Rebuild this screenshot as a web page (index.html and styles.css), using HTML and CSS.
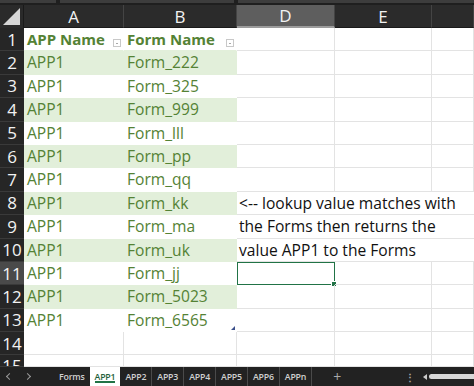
FILE: index.html
```html
<!DOCTYPE html>
<html lang="en">
<head>
    <meta charset="UTF-8">
    <title>APP1 - Sheet</title>
    <link rel="stylesheet" href="styles.css">
</head>
<body>
    <div class="ribbon-edge">
        <span class="seg s1"></span><span class="seg s2"></span><span class="seg s3"></span>
    </div>
    <div class="sheet">
        <div class="corner"></div>
        <div class="col-head">A</div>
        <div class="col-head">B</div>
        <div class="col-head selected">D</div>
        <div class="col-head">E</div>
        <div class="col-head"></div>

        <div class="row-head">1</div>
        <div class="cell th">APP Name<span class="filter"></span></div>
        <div class="cell th">Form Name<span class="filter"></span></div>
        <div class="cell"></div><div class="cell"></div><div class="cell"></div>

        <div class="row-head">2</div>
        <div class="cell band">APP1</div><div class="cell band">Form_222</div>
        <div class="cell"></div><div class="cell"></div><div class="cell"></div>

        <div class="row-head">3</div>
        <div class="cell td">APP1</div><div class="cell td">Form_325</div>
        <div class="cell"></div><div class="cell"></div><div class="cell"></div>

        <div class="row-head">4</div>
        <div class="cell band">APP1</div><div class="cell band">Form_999</div>
        <div class="cell"></div><div class="cell"></div><div class="cell"></div>

        <div class="row-head">5</div>
        <div class="cell td">APP1</div><div class="cell td">Form_lll</div>
        <div class="cell"></div><div class="cell"></div><div class="cell"></div>

        <div class="row-head">6</div>
        <div class="cell band">APP1</div><div class="cell band">Form_pp</div>
        <div class="cell"></div><div class="cell"></div><div class="cell"></div>

        <div class="row-head">7</div>
        <div class="cell td">APP1</div><div class="cell td">Form_qq</div>
        <div class="cell"></div><div class="cell"></div><div class="cell"></div>

        <div class="row-head">8</div>
        <div class="cell band">APP1</div><div class="cell band">Form_kk</div>
        <div class="cell note">&lt;-- lookup value matches with</div>

        <div class="row-head">9</div>
        <div class="cell td">APP1</div><div class="cell td">Form_ma</div>
        <div class="cell note">the Forms then returns the</div>

        <div class="row-head">10</div>
        <div class="cell band">APP1</div><div class="cell band">Form_uk</div>
        <div class="cell note">value APP1 to the Forms</div>

        <div class="row-head active">11</div>
        <div class="cell td">APP1</div><div class="cell td">Form_jj</div>
        <div class="cell current"><span class="fill-handle"></span></div><div class="cell"></div><div class="cell"></div>

        <div class="row-head">12</div>
        <div class="cell band">APP1</div><div class="cell band">Form_5023</div>
        <div class="cell"></div><div class="cell"></div><div class="cell"></div>

        <div class="row-head">13</div>
        <div class="cell td">APP1</div><div class="cell td last">Form_6565<span class="resize"></span></div>
        <div class="cell"></div><div class="cell"></div><div class="cell"></div>

        <div class="row-head">14</div>
        <div class="cell"></div><div class="cell"></div>
        <div class="cell"></div><div class="cell"></div><div class="cell"></div>

        <div class="row-head last-row">15</div>
        <div class="cell"></div><div class="cell"></div>
        <div class="cell"></div><div class="cell"></div><div class="cell"></div>
    </div>

    <div class="tabbar">
        <span class="nav prev"></span>
        <span class="nav next"></span>
        <div class="tabs">
            <span class="tab">Forms</span>
            <span class="tab active">APP1</span>
            <span class="tab">APP2</span>
            <span class="tab">APP3</span>
            <span class="tab">APP4</span>
            <span class="tab">APP5</span>
            <span class="tab">APP6</span>
            <span class="tab">APPn</span>
        </div>
        <span class="add">+</span>
        <span class="dots">&#8942;</span>
        <div class="scroll">
            <span class="arrow"></span>
            <span class="thumb"></span>
        </div>
    </div>
</body>
</html>
```

FILE: styles.css
```css
body {
    margin: 0;
    width: 474px;
    height: 386px;
    overflow: hidden;
    background: #fff;
    font-family: "Open Sans", "Liberation Sans", sans-serif;
}

.ribbon-edge {
    height: 5px;
    background: #1f1f1f;
    display: flex;
    gap: 4px;
}

.seg {
    height: 3px;
    background: #3d3d3d;
}

.s1 { width: 56px; }
.s2 { width: 174px; }
.s3 { flex: 1; }

.sheet {
    display: grid;
    grid-template-columns: 24px 100px 113px 98px 97px 42px;
    grid-template-rows: 23px repeat(14, 23.4px) 1fr;
    height: 362px;
    overflow: hidden;
}

.corner {
    background: #2a2a2a;
    border-right: 1px solid #1a1a1a;
    position: relative;
}

.corner::after {
    content: "";
    position: absolute;
    right: 3px;
    bottom: 3px;
    border-left: 17px solid transparent;
    border-bottom: 17px solid #d6d6d6;
}

.col-head {
    background: #2b2b2b;
    color: #f2f2f2;
    font-size: 17px;
    display: flex;
    align-items: center;
    justify-content: center;
    border-right: 1px solid #444;
    border-bottom: 1px solid #1a1a1a;
}

.col-head.selected {
    background: #5e5e5e;
    border-bottom: 2px solid #9c9c9c;
}

.row-head {
    background: #262626;
    color: #f2f2f2;
    font-size: 17px;
    display: flex;
    align-items: center;
    justify-content: center;
    border-bottom: 1px solid #3a3a3a;
    overflow: hidden;
}

.row-head.last-row {
    align-items: flex-start;
    line-height: 20px;
    padding-top: 1px;
}

.row-head.active {
    background: #4a4a4a;
}

.cell {
    border-right: 1px solid #e3e3e3;
    border-bottom: 1px solid #e3e3e3;
    font-size: 15.6px;
    line-height: 22px;
    padding-left: 3px;
    white-space: nowrap;
    position: relative;
    color: #111;
}

.th {
    font-size: 15px;
    font-weight: bold;
    color: #548235;
    border-right-color: #fff;
    border-bottom-color: #e2efda;
}

.td {
    color: #548235;
    border-right-color: #fff;
    border-bottom-color: #fff;
}

.band {
    background: #e2efda;
    color: #548235;
    border-right-color: #e2efda;
    border-bottom-color: #e2efda;
}

.filter {
    position: absolute;
    right: 2px;
    bottom: 3px;
    width: 6px;
    height: 6px;
    border: 1px solid #c8c8c8;
    background: #fff;
}

.filter::after {
    content: "";
    position: absolute;
    left: 2px;
    top: 3px;
    border-left: 1px solid transparent;
    border-right: 1px solid transparent;
    border-top: 1px solid #555;
}

.resize {
    position: absolute;
    right: 1px;
    bottom: 1px;
    width: 4px;
    height: 4px;
    background: #3b4f8a;
    clip-path: polygon(100% 0, 100% 100%, 0 100%);
}

.note {
    grid-column: span 3;
    color: #111;
    border-right: none;
    padding-left: 2px;
}

.current {
    border: 1px solid #217346;
}

.fill-handle {
    position: absolute;
    right: -3px;
    bottom: -3px;
    width: 4px;
    height: 4px;
    background: #217346;
    border: 1px solid #fff;
}

.tabbar {
    height: 19px;
    background: #222;
    display: flex;
    align-items: center;
    font-size: 8.8px;
    font-weight: 600;
    letter-spacing: -0.2px;
    color: #d0d0d0;
}

.nav {
    flex-shrink: 0;
    width: 18px;
    height: 19px;
    display: flex;
    align-items: center;
    justify-content: center;
}

.nav::before {
    content: "";
    width: 4px;
    height: 4px;
    border-left: 1px solid #9a9a9a;
    border-bottom: 1px solid #9a9a9a;
}

.prev::before {
    transform: rotate(45deg);
}

.next::before {
    transform: rotate(-135deg);
}

.tabs {
    display: flex;
    align-items: stretch;
    height: 19px;
    margin-left: 18px;
    flex-shrink: 0;
}

.tab {
    padding: 0 5px;
    display: flex;
    align-items: center;
    border-right: 1px solid #4a4a4a;
}

.tab:first-child {
    border-right: none;
}

.tab.active {
    background: #fff;
    color: #1f5f3a;
    border-right: none;
    position: relative;
}

.tab.active::after {
    content: "";
    position: absolute;
    left: 5px;
    right: 5px;
    bottom: 3px;
    height: 2px;
    background: #217346;
}

.add {
    margin-left: 21px;
    font-size: 14px;
    font-weight: normal;
    color: #aaa;
}

.dots {
    margin-left: 64px;
    color: #aaa;
    font-size: 10px;
}

.scroll {
    margin-left: 8px;
    flex: 1;
    display: flex;
    align-items: center;
    gap: 2px;
}

.arrow {
    width: 0;
    height: 0;
    border-top: 3px solid transparent;
    border-bottom: 3px solid transparent;
    border-right: 4px solid #ccc;
}

.thumb {
    flex: 1;
    height: 5px;
    border-radius: 3px 0 0 3px;
    background: #d8d8d8;
}
```
